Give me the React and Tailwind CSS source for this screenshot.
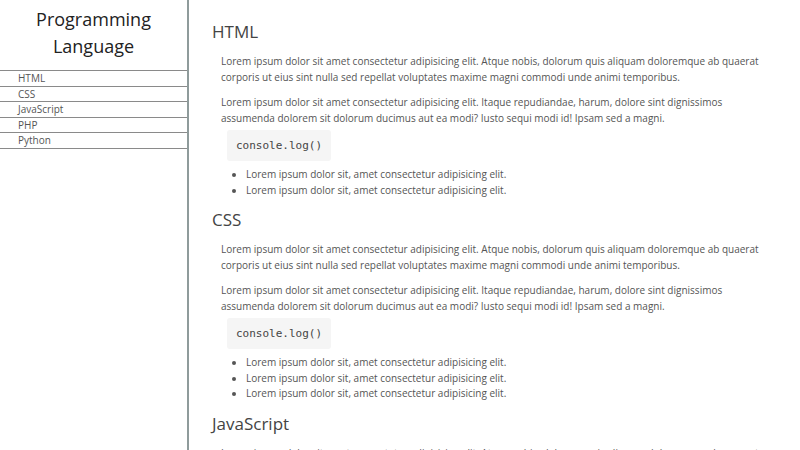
export default function App() {
  const p1 =
    "Lorem ipsum dolor sit amet consectetur adipisicing elit. Atque nobis, dolorum quis aliquam doloremque ab quaerat corporis ut eius sint nulla sed repellat voluptates maxime magni commodi unde animi temporibus.";
  const p2 =
    "Lorem ipsum dolor sit amet consectetur adipisicing elit. Itaque repudiandae, harum, dolore sint dignissimos assumenda dolorem sit dolorum ducimus aut ea modi? Iusto sequi modi id! Ipsam sed a magni.";
  const li = "Lorem ipsum dolor sit, amet consectetur adipisicing elit.";
  const sections = [
    { title: "HTML", items: 2 },
    { title: "CSS", items: 3 },
    { title: "JavaScript", items: 2 },
  ];
  return (
    <div className="flex h-[450px] w-[800px] overflow-hidden bg-white font-['Open_Sans',sans-serif]">
      <aside className="h-full w-[189px] shrink-0 border-r-2 border-[#8f9b9b]">
        <h1 className="pt-[6px] pb-[10px] text-center text-[18px] leading-[27px] text-[#222]">
          Programming
          <br />
          Language
        </h1>
        <ul className="border-t border-[#8a8a8a] text-[10px] text-[#555]">
          {["HTML", "CSS", "JavaScript", "PHP", "Python"].map((n) => (
            <li key={n} className="border-b border-[#8a8a8a] pl-[18px] leading-[14.5px]">
              {n}
            </li>
          ))}
        </ul>
      </aside>
      <main className="flex-1 pl-[23px] pr-[30px] pt-[18px] text-[#555]">
        {sections.map((s) => (
          <section key={s.title} className="mb-[8px]">
            <h2 className="text-[17px] leading-[28px] text-[#444]">{s.title}</h2>
            <div className="pl-[9px]">
              <p className="mt-[7px] text-[10px] leading-[16px]">{p1}</p>
              <p className="mt-[9px] text-[10px] leading-[16px]">{p2}</p>
              <div className="mt-[4px] ml-[6px] inline-block rounded-[3px] bg-[#f5f5f5] px-[9px] py-[8px] font-['DejaVu_Sans_Mono',monospace] text-[11px] leading-[15px] text-[#444]">
                console.log()
              </div>
              <ul className="mt-[6px] list-disc pl-[25px] text-[10px] leading-[15.5px]">
                {Array.from({ length: s.items }).map((_, i) => (
                  <li key={i}>{li}</li>
                ))}
              </ul>
            </div>
          </section>
        ))}
      </main>
    </div>
  );
}
